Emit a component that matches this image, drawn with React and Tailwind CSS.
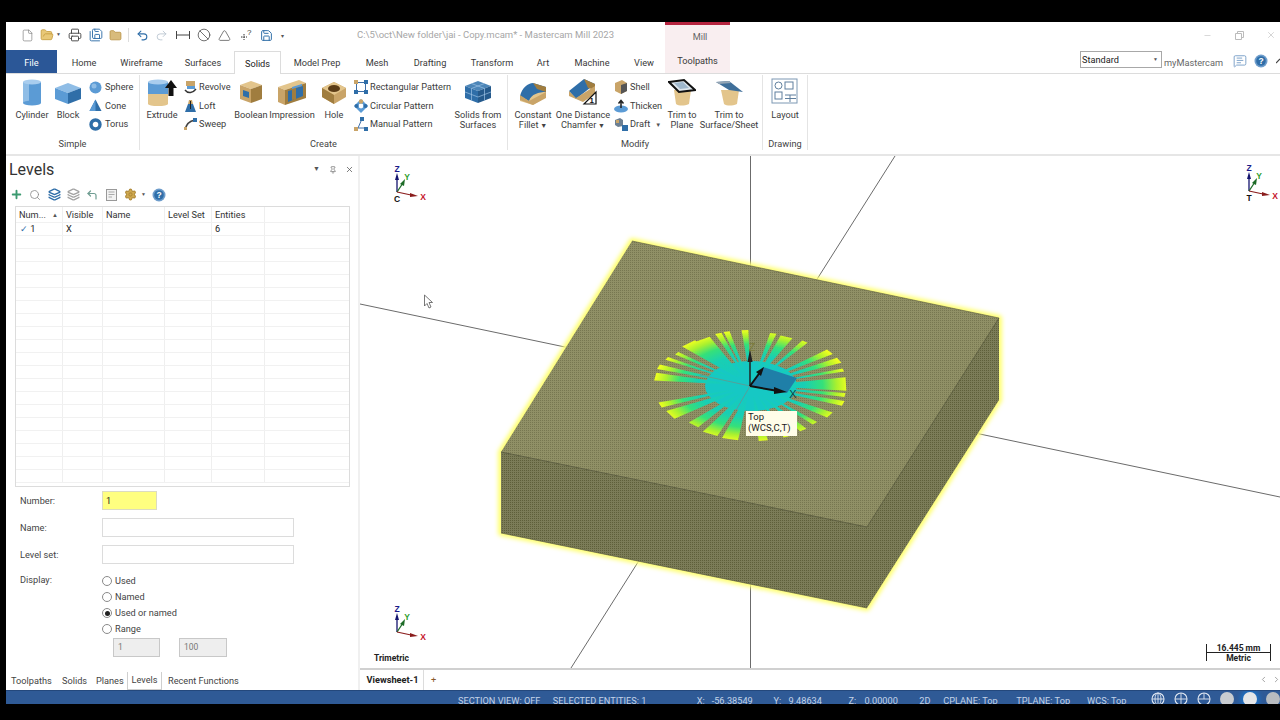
import React from "react";
import { File, FolderOpen, Printer, SaveAll, Folder, Undo2, Redo2, Ban, Triangle, Save, Plus, Search, Layers, CornerUpLeft, Settings, X, Minus, Pin, ChevronLeft, ChevronRight, MessageSquareText } from "lucide-react";

const FONT = "font-['Roboto','Open_Sans',sans-serif]";

const I = ({ w = 28, h = 28, children }) => (
  <svg width={w} height={h} viewBox={`0 0 ${w} ${h}`} className="block shrink-0">{children}</svg>
);
const BLUE = "#5b9bd5", DBLUE = "#2f6ea8", LBLUE = "#8fbde6", TAN = "#c9a468", DTAN = "#a07d3f", LTAN = "#e3c58c";

const Cylinder = () => (
  <I w={20} h={28}>
    <rect x="1" y="4" width="18" height="21" fill={BLUE} />
    <rect x="1" y="4" width="6" height="21" fill={LBLUE} />
    <ellipse cx="10" cy="25" rx="9" ry="2.5" fill={BLUE} />
    <ellipse cx="10" cy="4" rx="9" ry="2.5" fill="#a9cdee" />
  </I>
);
const Block = () => (
  <I w={28} h={28}>
    <polygon points="14,5 27,10 14,15 1,10" fill={LBLUE} />
    <polygon points="1,10 14,15 14,26 1,21" fill={BLUE} />
    <polygon points="27,10 14,15 14,26 27,21" fill={DBLUE} />
  </I>
);
const Sphere = () => (<I w={13} h={13}><circle cx="6.5" cy="6.5" r="6" fill={BLUE} /><circle cx="5" cy="5" r="2.5" fill={LBLUE} /></I>);
const Cone = () => (<I w={13} h={13}><polygon points="6.5,0.5 12.5,12 0.5,12" fill={DBLUE} /><polygon points="6.5,0.5 6.5,12 0.5,12" fill={BLUE} /></I>);
const Torus = () => (<I w={13} h={13}><circle cx="6.5" cy="6.5" r="4.5" fill="none" stroke={DBLUE} strokeWidth="3.4" /></I>);
const Extrude = () => (
  <I w={30} h={28}>
    <rect x="1" y="15" width="20" height="11" fill={LTAN} />
    <ellipse cx="11" cy="26" rx="10" ry="2" fill={LTAN} />
    <rect x="1" y="4" width="20" height="12" fill={BLUE} />
    <ellipse cx="11" cy="4" rx="10" ry="2.5" fill="#a9cdee" />
    <polygon points="24,2 30,10 26.5,10 26.5,18 21.5,18 21.5,10 18,10" fill="#111" />
  </I>
);
const Revolve = () => (<I w={13} h={14}><rect x="2" y="1" width="9" height="5" fill={TAN} /><rect x="3" y="6" width="8" height="3" fill={BLUE} /><path d="M1 10c3 4 8 3 11-1" fill="none" stroke="#333" strokeWidth="1.4" /></I>);
const Loft = () => (<I w={13} h={14}><polygon points="1,13 12,13 9,5 4,5" fill={DBLUE} /><polygon points="4,5 9,5 8,1 5,1" fill={TAN} /><path d="M6.5 10V2" stroke="#222" strokeWidth="1" /></I>);
const Sweep = () => (<I w={13} h={14}><path d="M1.5 12.5C2 7 6 4 11 3" fill="none" stroke="#444" strokeWidth="1.6" /><rect x="9" y="1" width="4" height="4" fill={DBLUE} /><rect x="0" y="10" width="3" height="3" fill={TAN} /></I>);
const Boolean_ = () => (
  <I w={26} h={28}>
    <polygon points="13,3 24,7 13,11 2,7" fill={LTAN} />
    <polygon points="2,7 13,11 13,25 2,21" fill={TAN} />
    <polygon points="24,7 13,11 13,25 24,21" fill={DTAN} />
    <polygon points="5,12 11,14 11,20 5,18" fill={DBLUE} />
  </I>
);
const Impression = () => (
  <I w={30} h={28}>
    <polygon points="1,9 22,2 29,5 8,12" fill={LTAN} />
    <polygon points="1,9 8,12 8,27 1,24" fill={TAN} />
    <polygon points="8,12 29,5 29,20 8,27" fill={DTAN} />
    <polygon points="11,13 15,12 15,22 19,21 19,10 26,8 26,18 11,24" fill={DBLUE} />
    <polygon points="15,9 25,6 25,8 15,11" fill={BLUE} />
  </I>
);
const Hole = () => (
  <I w={26} h={26}>
    <polygon points="13,2 25,8 25,17 13,24 1,17 1,8" fill={TAN} />
    <polygon points="13,2 25,8 13,15 1,8" fill={LTAN} />
    <ellipse cx="13" cy="8.5" rx="6" ry="3.6" fill="#5c3d17" />
    <polygon points="1,8 13,15 13,24 1,17" fill={DTAN} />
  </I>
);
const RectP = () => (<I w={14} h={14}><rect x="2.5" y="2.5" width="9" height="9" fill="none" stroke="#3f6fa8" strokeWidth="1" /><rect x="0" y="0" width="4" height="4" fill={TAN} /><rect x="10" y="0" width="4" height="4" fill={DBLUE} /><rect x="0" y="10" width="4" height="4" fill={DBLUE} /><rect x="10" y="10" width="4" height="4" fill={DBLUE} /></I>);
const CircP = () => (<I w={14} h={14}><polygon points="7,0 14,7 7,14 0,7" fill={BLUE} /><circle cx="7" cy="7" r="2.4" fill="#fff" /><circle cx="7" cy="2.5" r="2.2" fill={TAN} /><circle cx="11.5" cy="7" r="2" fill={DBLUE} /><circle cx="2.5" cy="7" r="2" fill={DBLUE} /></I>);
const ManP = () => (<I w={14} h={14}><path d="M4 11 7.500 3M4 11h7" stroke="#3f6fa8" strokeWidth="1" fill="none" /><rect x="6" y="0" width="4" height="4" fill={DBLUE} /><rect x="0" y="10" width="4" height="4" fill={TAN} /><rect x="10" y="10" width="4" height="4" fill={DBLUE} /></I>);
const SolidSurf = () => (
  <I w={28} h={28}>
    <polygon points="14,3 27,8 14,13 1,8" fill="#4d86b8" />
    <polygon points="1,8 14,13 14,25 1,20" fill="#2f6ea8" />
    <polygon points="27,8 14,13 14,25 27,20" fill="#255a8c" />
    <path d="M7.500 5.500 20.500 10.500M20.500 5.500 7.500 10.500M1 14 14 19 27 14M7.500 10.500V22.500M20.500 10.500V22.500" stroke="#9cc2e4" strokeWidth=".7" fill="none" />
  </I>
);
const Fillet = () => (
  <I w={28} h={26}>
    <path d="M1 16V21L14 25 27 17V11Z" fill={LTAN} />
    <path d="M1 16C3 8 9 3 14 3L27 7V12C20 12 12 14 10 21Z" fill={DBLUE} />
    <path d="M14 3 27 7V12L18 9Z" fill={DTAN} />
    <path d="M1 15 10 21 27 12V18L14 25 1 20Z" fill={TAN} />
  </I>
);
const Chamfer = () => (
  <I w={30} h={28}>
    <path d="M1 13 16 1 27 6 8 21Z" fill={DBLUE} />
    <path d="M16 1 27 6V12L20 10Z" fill={DTAN} />
    <path d="M1 13 8 20 27 8V16L15 24 1 18Z" fill={TAN} />
    <polygon points="16,26 28,14 28,26" fill="#fff" stroke="#111" strokeWidth="1.200" />
    <text x="21.500" y="25" fontSize="8" fontWeight="700" fill="#111" fontFamily="Liberation Sans">1</text>
  </I>
);
const Shell = () => (<I w={14} h={14}><polygon points="1,3 8,0 13,3 13,11 7,14 1,11" fill={TAN} /><polygon points="7,5 13,3 13,11 7,14" fill="#555" /></I>);
const Thicken = () => (<I w={14} h={14}><ellipse cx="7" cy="10" rx="7" ry="3.500" fill={BLUE} /><path d="M7 9V2M4.500 4.500 7 1.500 9.500 4.500" stroke="#222" strokeWidth="1.500" fill="none" /></I>);
const Draft = () => (<I w={14} h={14}><polygon points="1,3 6,1 9,3 9,9 4,10 1,8" fill="#6c7f92" /><rect x="8" y="8" width="6" height="6" fill={DBLUE} /><rect x="2" y="3" width="3" height="3" fill={TAN} /></I>);
const TrimPlane = () => (
  <I w={28} h={28}>
    <path d="M6 12H23L21 26C16 28 11 28 8 26Z" fill={LTAN} />
    <polygon points="1,4 16,2 27,12 11,14" fill="#dfe7ee" stroke="#111" strokeWidth="2" />
    <polygon points="6,5 15,4 21,10 12,11" fill="#9fb7cc" />
  </I>
);
const TrimSurf = () => (
  <I w={30} h={28}>
    <path d="M7 12H25L23 26C18 28 13 28 10 26Z" fill={LTAN} />
    <polygon points="2,4 15,3 29,14 15,12" fill="#3f6f9a" />
    <polygon points="2,4 15,3 17,5 5,6" fill="#95a6b5" />
  </I>
);
const Layout = () => (
  <I w={28} h={28}>
    <rect x="1" y="1" width="25" height="24" fill="none" stroke="#7c98b3" strokeWidth="1" />
    <circle cx="7.500" cy="7.500" r="3.500" fill="none" stroke="#5f7f9e" />
    <rect x="14" y="4" width="8" height="7" fill="none" stroke="#5f7f9e" />
    <rect x="4" y="14" width="7" height="7" fill="none" stroke="#5f7f9e" />
    <path d="M14 20.500H25M14 17H25M19 17V24" stroke="#5f7f9e" fill="none" />
  </I>
);

const Big = ({ w, icon, label, caret }) => (
  <div style={{ width: w }} className="flex flex-col items-center shrink-0 h-[62px]">
    <div className="h-[31px] flex items-end justify-center">{icon}</div>
    <div className="mt-[4px] text-center leading-[9.5px] whitespace-pre">{label}{caret && <span className="text-[#444] text-[7px]"> ▼</span>}</div>
  </div>
);
const Small = ({ icon, label, caret, gap = "gap-[3px]" }) => (
  <div className={`h-[18.5px] flex items-center ${gap} whitespace-nowrap`}>{icon}<span>{label}</span>{caret && <span className="text-[#555] text-[6px] ml-[3px]">▼</span>}</div>
);
const Col = ({ w, pl, children }) => (
  <div style={{ width: w, paddingLeft: pl }} className="shrink-0 flex flex-col pt-[3px] h-[62px]">{children}</div>
);
const Group = ({ w, label, children }) => (
  <div style={{ width: w }} className="shrink-0 flex flex-col h-full border-r border-[#e4e4e4]">
    <div className="flex h-[62px]">{children}</div>
    <div className="text-center text-[#444] leading-[12px] mt-[1px]">{label}</div>
  </div>
);

const TABS = [
  ["Home", 54], ["Wireframe", 61], ["Surfaces", 62],
];
const TABS2 = [
  ["Model Prep", 72], ["Mesh", 48], ["Drafting", 58], ["Transform", 66], ["Art", 36], ["Machine", 62], ["View", 42],
];
const Tab = ({ w, children }) => (
  <div style={{ width: w }} className="shrink-0 h-[23px] pt-[2px] flex items-center justify-center text-[#3a3a3a]">{children}</div>
);

const Triad = ({ x, y, letter }) => (
  <g>
    <path d={`M${x} ${y}V${y - 14}`} stroke="#14146e" strokeWidth="1.300" />
    <polygon points={`${x},${y - 19} ${x - 2},${y - 12} ${x + 2},${y - 12}`} fill="#14146e" />
    <path d={`M${x} ${y}L${x + 6} ${y - 9}`} stroke="#1d6b27" strokeWidth="1.300" />
    <polygon points={`${x + 8},${y - 13} ${x + 3},${y - 8} ${x + 7},${y - 6}`} fill="#1d6b27" />
    <path d={`M${x} ${y}L${x + 14} ${y + 3}`} stroke="#8a1c1c" strokeWidth="1.200" />
    <polygon points={`${x + 21},${y + 4} ${x + 13},${y + 1} ${x + 13},${y + 5}`} fill="#8a1c1c" />
    <text x={x} y={y - 20} textAnchor="middle" fontSize="8.500" fontWeight="700" fill="#1b1b8a" fontFamily="Liberation Sans">Z</text>
    <text x={x + 10} y={y - 12} textAnchor="middle" fontSize="8.500" fontWeight="700" fill="#2ca02c" fontFamily="Liberation Sans">Y</text>
    <text x={x + 26} y={y + 8} textAnchor="middle" fontSize="8.500" fontWeight="700" fill="#c4122a" fontFamily="Liberation Sans">X</text>
    {letter && <text x={x} y={y + 10} textAnchor="middle" fontSize="8.500" fontWeight="700" fill="#111" fontFamily="Liberation Sans">{letter}</text>}
  </g>
);

const CX = 751, CY = 386, RX = 97, RY = 56;
const rayTips = [
  [345, 60, 2], [265, 70, 2], [290, 65, 1.8], [430, 70, 2], [470, 80, 4], [525, 95, 2], [600, 125, 2.8], [630, 150, 2.8], [640, 180, 1.6],
  [650, 222, 7], [645, 255, 2], [640, 280, 2.6], [600, 315, 3.2], [555, 340, 2], [520, 360, 2.4], [470, 380, 2], [400, 392, 2.8], [300, 388, 5], [240, 372, 5],
  [190, 345, 4], [120, 315, 4.8], [90, 285, 2.8], [75, 200, 4], [85, 170, 2.4], [110, 145, 1.6], [140, 130, 1.6], [175, 100, 5], [215, 88, 5.5],
];
const rays = rayTips.map(([cx, cy, w]) => {
  const nx = (cx / 3 + 630 - CX) / RX, ny = (cy / 3 + 310 - CY) / RY;
  const t = Math.atan2(ny, nx), d = (w * Math.PI) / 180, o = Math.min(Math.hypot(nx, ny), 1.02);
  const p = (a, r) => `${(CX + Math.cos(a) * r * RX).toFixed(1)},${(CY + Math.sin(a) * r * RY).toFixed(1)}`;
  return [p(t - d * .6, .2), p(t - d, o), p(t + d, o), p(t + d * .6, .2)].join(" ");
});

const Scene = () => (
  <svg viewBox="360 156 920 512" width="920" height="512" className="block">
    <defs>
      <pattern id="mt" width="2" height="2" patternUnits="userSpaceOnUse">
        <rect width="2" height="2" fill="#909066" /><rect width="1" height="1" fill="#777750" />
      </pattern>
      <pattern id="ms" width="2" height="2" patternUnits="userSpaceOnUse">
        <rect width="2" height="2" fill="#7b7c58" /><rect width="1" height="1" fill="#5e5f3a" />
      </pattern>
      <radialGradient id="rg" gradientUnits="userSpaceOnUse" cx="0" cy="0" r="1" gradientTransform={`translate(${CX} ${CY}) scale(${RX} ${RY})`}>
        <stop offset="0" stopColor="#14c6c8" />
        <stop offset=".55" stopColor="#18cfb4" />
        <stop offset=".74" stopColor="#35e07a" />
        <stop offset=".88" stopColor="#a8f030" />
        <stop offset="1" stopColor="#eeff20" />
      </radialGradient>
      <filter id="gl" x="-5%" y="-5%" width="110%" height="110%"><feGaussianBlur stdDeviation="2.200" /></filter>
    </defs>
    <path d="M750.500 156V668M895 156 571 668M360 304 1280 497" stroke="#6b6b6b" strokeWidth="1" fill="none" />
    <polygon points="632,241 999,318 999,400 867,608 501,533 501,452" fill="#ffff70" stroke="#ffff70" strokeWidth="6" strokeLinejoin="round" filter="url(#gl)" />
    <polygon points="632,241 999,318 867,527 501,452" fill="url(#mt)" />
    <polygon points="501,452 867,527 867,608 501,533" fill="url(#ms)" />
    <polygon points="999,318 999,400 867,608 867,527" fill="url(#ms)" />
    <path d="M501 452 867 527 999 318" stroke="#55563f" strokeWidth=".9" fill="none" />
    <path d="M632 241 999 318M501 533 867 608" stroke="#55563f" strokeWidth=".6" fill="none" />
    <ellipse cx={CX} cy={CY} rx="46" ry="25" fill="#16c8c4" />
    <g fill="url(#rg)">{rays.map((r, i) => <polygon key={i} points={r} />)}</g>
    <polygon points="763,367 797,378 787,393 750,386" fill="#1f7fa8" />
    <path d="M750 386 700 375M750 386 735 412" stroke="#6f8f88" strokeWidth=".7" />
    <path d="M750 386V360" stroke="#222" strokeWidth="1.500" />
    <polygon points="750,349 747.500,362 752.500,362" fill="#222" />
    <path d="M750 386 761 371" stroke="#111" strokeWidth="2" />
    <polygon points="764,367 756,372 761,376" fill="#111" />
    <path d="M750 386 778 391" stroke="#111" strokeWidth="2" />
    <polygon points="787,392 774,387 774,394" fill="#111" />
    <text x="793" y="398" textAnchor="middle" fontSize="11" fill="#143c3c" fontFamily="Liberation Sans">X</text>
    <text x="752" y="351" textAnchor="middle" fontSize="11" fill="#7c7c3c" fontFamily="Liberation Sans">Z</text>
    <Triad x={397} y={192} letter="C" />
    <Triad x={1249} y={191} letter="T" />
    <Triad x={397} y={632} />
    <path d="M424.500 295V306L427 303.500 429 308 431 307 429 302.500H432.500Z" fill="#fff" stroke="#555" strokeWidth=".8" />
  </svg>
);

const Globe = ({ k }) => (
  <svg width="14" height="14" viewBox="0 0 14 14" className="shrink-0 block">
    <circle cx="7" cy="7" r="6" fill="none" stroke="#dfe7f2" strokeWidth="1.100" />
    <path d={k === 2 ? "M1 7H13M7 1V7" : "M1 7H13M7 1V13"} stroke="#dfe7f2" strokeWidth=".9" fill="none" />
    {k === 0 && <ellipse cx="7" cy="7" rx="3" ry="6" fill="none" stroke="#dfe7f2" strokeWidth=".9" />}
  </svg>
);
const Ball = ({ c, glow }) => (
  <div className={`w-[14px] h-[14px] shrink-0 rounded-full ${glow ? "bg-[#e4e6e8] shadow-[0_0_4px_3px_#1f6fc0]" : c}`} />
);

const Col_ = [47, 40, 62, 47, 53, 85];
const Row = ({ children, h = "h-[13px]" }) => (
  <div className={`flex ${h} border-b border-[#f1f1f1]`}>
    {Col_.map((w, i) => (
      <div key={i} style={{ width: w }} className="shrink-0 border-r border-[#efefef] last:border-r-0 px-[3px] flex items-center overflow-hidden whitespace-nowrap">{children && children[i]}</div>
    ))}
  </div>
);
const Radio = ({ label, on }) => (
  <div className="h-[16px] flex items-center gap-[3px]">
    <div className="w-[10px] h-[10px] rounded-full border border-[#8a8a8a] bg-white flex items-center justify-center">{on && <div className="w-[5px] h-[5px] rounded-full bg-[#222]" />}</div>
    <span>{label}</span>
  </div>
);

export default function App() {
  return (
    <div className={`w-[1280px] h-[720px] bg-black overflow-hidden flex flex-col text-[9.2px] text-[#333] ${FONT}`}>
      <div className="h-[22px] shrink-0 bg-black" />
      <div className="ml-[6px] flex-1 min-h-0 bg-white flex flex-col">
        {/* title bar */}
        <div className="h-[26px] shrink-0 flex items-center">
          <div className="w-[351px] shrink-0 h-full flex items-center pl-[15px]">
            <File size={13} color="#777" strokeWidth={1.2} className="shrink-0" />
            <FolderOpen size={14} color="#c49a3c" fill="#e8c878" strokeWidth={1.4} className="shrink-0 ml-[6px]" />
            <span className="text-[5px] text-[#555] ml-[2px]">▼</span>
            <Printer size={14} color="#444" strokeWidth={1.6} className="shrink-0 ml-[7px]" />
            <SaveAll size={14} color="#2f6ea8" strokeWidth={1.6} className="shrink-0 ml-[7px]" />
            <Folder size={13} color="#b58d3d" fill="#d8bb7c" strokeWidth={1.4} className="shrink-0 ml-[6px]" />
            <div className="w-px h-[14px] bg-[#ddd] ml-[6px]" />
            <Undo2 size={13} color="#2f6ea8" strokeWidth={2} className="shrink-0 ml-[7px]" />
            <Redo2 size={13} color="#b8c4d0" strokeWidth={1.6} className="shrink-0 ml-[6px]" />
            <svg width="14" height="10" viewBox="0 0 14 10" className="shrink-0 ml-[8px]"><path d="M.5 1V9M13.500 1V9M1 5H13" stroke="#444" strokeWidth="1" fill="none" /></svg>
            <Ban size={14} color="#444" strokeWidth={1.3} className="shrink-0 ml-[7px]" />
            <Triangle size={13} color="#444" strokeWidth={1.3} className="shrink-0 ml-[7px]" />
            <svg width="14" height="14" viewBox="0 0 14 14" className="shrink-0 ml-[8px]"><path d="M5 6V12M2 9H8" stroke="#333" strokeWidth="1" strokeDasharray="1.500 1" /><text x="8" y="7" fontSize="8" fill="#333" fontFamily="Liberation Sans">?</text></svg>
            <Save size={13} color="#2f6ea8" strokeWidth={1.8} className="shrink-0 ml-[7px]" />
            <span className="text-[6px] text-[#555] ml-[8px]">▾</span>
          </div>
          <div className="w-[308px] shrink-0 text-[#a6a6a6] text-[9.5px] whitespace-nowrap">C:\5\oct\New folder\jai - Copy.mcam* - Mastercam Mill 2023</div>
          <div className="w-[65px] shrink-0 h-full bg-[#f9eef0] border-t-[3px] border-[#b5243f] flex items-center justify-center pl-[5px] text-[#666]">Mill</div>
          <div className="flex-1" />
          <div className="flex items-center pr-[4px] text-[#bbb]">
            <Minus size={9} strokeWidth={1.5} className="mr-[23px]" />
            <svg width="9" height="9" viewBox="0 0 9 9" className="mr-[22px]"><path d="M.5 2.500H6.500V8.500H.5ZM2.500 2.500V.5H8.500V6.500H6.500" fill="none" stroke="#bbb" /></svg>
            <X size={10} strokeWidth={1.5} />
          </div>
        </div>
        {/* tabs */}
        <div className="h-[26px] shrink-0 flex items-end border-b border-[#dcdcdc]">
          <div className="w-[51px] h-[23px] pt-[2px] shrink-0 bg-[#2b5797] text-white flex items-center justify-center">File</div>
          {TABS.map(([t, w]) => <Tab key={t} w={w}>{t}</Tab>)}
          <div className="w-[47px] h-[23px] pt-[2px] -mb-px shrink-0 bg-white border border-b-0 border-[#dcdcdc] flex items-center justify-center text-[#222]">Solids</div>
          {TABS2.map(([t, w]) => <Tab key={t} w={w}>{t}</Tab>)}
          <div className="w-[65px] h-full shrink-0 bg-[#f9eef0] flex items-end justify-center pb-[5px] text-[#3a3a3a]">Toolpaths</div>
          <div className="flex-1" />
          <div className="h-full flex items-center">
            <div className="w-[82px] h-[17px] mb-[2px] border border-[#a8a8a8] flex items-center justify-between pl-[1px] pr-[3px] text-[#222]"><span>Standard</span><span className="text-[5px] text-[#555]">▼</span></div>
            <span className="ml-[2px] w-[69px] text-[#666] mt-[4px]">myMastercam</span>
            <MessageSquareText size={14} color="#6f98c4" strokeWidth={1.5} className="shrink-0" />
            <svg width="14" height="14" viewBox="0 0 14 14" className="shrink-0 ml-[7px]"><circle cx="7" cy="7" r="6.500" fill="#6d9ccb" /><circle cx="7" cy="7" r="4.800" fill="#2f6ea8" /><text x="7" y="10" textAnchor="middle" fontSize="8.500" fontWeight="700" fill="#fff" fontFamily="Liberation Sans">?</text></svg>
            <svg width="4" height="8" viewBox="0 0 4 8" className="shrink-0 ml-[8px]"><path d="M0 6 4 2" stroke="#444" strokeWidth="1.200" /></svg>
          </div>
        </div>
        {/* ribbon */}
        <div className="h-[82px] shrink-0 flex border-b-2 border-[#e6e6e6] pt-[1px] pb-[4px] text-[#3d3d3d]">
          <Group w={134} label="Simple">
            <div className="w-[8px] shrink-0" />
            <Big w={36} icon={<Cylinder />} label="Cylinder" />
            <Big w={36} icon={<Block />} label="Block" />
            <Col w={52} pl={3}>
              <Small icon={<Sphere />} label="Sphere" />
              <Small icon={<Cone />} label="Cone" />
              <Small icon={<Torus />} label="Torus" />
            </Col>
          </Group>
          <Group w={368} label="Create">
            <Big w={44} icon={<Extrude />} label="Extrude" />
            <Col w={48} pl={0}>
              <Small icon={<Revolve />} label="Revolve" gap="gap-[2px]" />
              <Small icon={<Loft />} label="Loft" gap="gap-[2px]" />
              <Small icon={<Sweep />} label="Sweep" gap="gap-[2px]" />
            </Col>
            <Big w={38} icon={<Boolean_ />} label="Boolean" />
            <Big w={44} icon={<Impression />} label="Impression" />
            <Big w={40} icon={<Hole />} label="Hole" />
            <Col w={98} pl={0}>
              <Small icon={<RectP />} label="Rectangular Pattern" gap="gap-[2px]" />
              <Small icon={<CircP />} label="Circular Pattern" gap="gap-[2px]" />
              <Small icon={<ManP />} label="Manual Pattern" gap="gap-[2px]" />
            </Col>
            <Big w={52} icon={<SolidSurf />} label={"Solids from\nSurfaces"} />
          </Group>
          <Group w={255} label="Modify">
            <div className="w-[2px] shrink-0" />
            <Big w={46} icon={<Fillet />} label={"Constant\nFillet"} caret />
            <Big w={54} icon={<Chamfer />} label={"One Distance\nChamfer"} caret />
            <div className="w-[4px] shrink-0" />
            <Col w={50} pl={0}>
              <Small icon={<Shell />} label="Shell" gap="gap-[2px]" />
              <Small icon={<Thicken />} label="Thicken" gap="gap-[2px]" />
              <Small icon={<Draft />} label="Draft" caret gap="gap-[2px]" />
            </Col>
            <Big w={36} icon={<TrimPlane />} label={"Trim to\nPlane"} />
            <Big w={58} icon={<TrimSurf />} label={"Trim to\nSurface/Sheet"} />
          </Group>
          <Group w={45} label="Drawing">
            <Big w={44} icon={<Layout />} label="Layout" />
          </Group>
        </div>
        {/* content */}
        <div className="flex-1 min-h-0 flex">
          {/* left panel */}
          <div className="w-[354px] shrink-0 h-full flex flex-col border-r-2 border-[#f0f0f0]">
            <div className="h-[27px] shrink-0 flex items-center pl-[3px] pr-[2px]">
              <span className="text-[16px] text-[#333] leading-none">Levels</span>
              <div className="flex-1" />
              <span className="text-[7px] text-[#555] mr-[9px]">▼</span>
              <Pin size={8} color="#666" className="mr-[8px]" />
              <X size={9} color="#555" className="mr-[2px]" />
            </div>
            <div className="h-[23px] shrink-0 flex items-center pl-[4px]">
              <Plus size={13} color="#3b9a70" strokeWidth={3.5} className="shrink-0" />
              <Search size={12} color="#888" strokeWidth={1.6} className="shrink-0 ml-[6px]" />
              <Layers size={13} color="#2f6ea8" strokeWidth={2.4} className="shrink-0 ml-[7px]" />
              <Layers size={13} color="#a3a3a3" strokeWidth={2.4} className="shrink-0 ml-[6px]" />
              <CornerUpLeft size={12} color="#6f9d92" strokeWidth={2.4} className="shrink-0 ml-[6px]" />
              <svg width="11" height="12" viewBox="0 0 11 12" className="shrink-0 ml-[8px]"><rect x=".5" y=".5" width="10" height="11" fill="#f2f2f2" stroke="#999" /><path d="M2.500 3H8.500M2.500 5.500H8.500M2.500 8H6" stroke="#aaa" /></svg>
              <Settings size={13} color="#b08a3a" fill="#d0aa50" strokeWidth={2} className="shrink-0 ml-[7px]" />
              <span className="text-[5px] text-[#555] ml-[4px]">▼</span>
              <svg width="14" height="14" viewBox="0 0 14 14" className="shrink-0 ml-[6px]"><circle cx="7" cy="7" r="6.500" fill="#6d9ccb" /><circle cx="7" cy="7" r="4.800" fill="#2f6ea8" /><text x="7" y="10" textAnchor="middle" fontSize="8.500" fontWeight="700" fill="#fff" fontFamily="Liberation Sans">?</text></svg>
            </div>
            <div className="ml-[9px] w-[335px] h-[281px] shrink-0 border border-[#dcdcdc] overflow-hidden">
              <Row h="h-[16px]">{[<span className="flex w-full justify-between items-center">Num...<span className="text-[6px] text-[#555] mr-[1px]">▲</span></span>, "Visible", "Name", "Level Set", "Entities", ""]}</Row>
              <Row>{[<span className="text-[#222] pl-[1px]"><span className="text-[#2f6ea8]">✓</span> 1</span>, <span className="text-[#222]">X</span>, "", "", <span className="text-[#222]">6</span>, ""]}</Row>
              {Array.from({ length: 19 }).map((_, i) => <Row key={i} />)}
            </div>
            <div className="flex-1 min-h-0 pl-[14px] text-[#444]">
              <div className="h-[27px] flex items-center"><span className="w-[82px]">Number:</span><div className="w-[55px] h-[19px] bg-[#ffff80] border border-[#dcdcc0] pl-[3px] flex items-center text-[#222]">1</div></div>
              <div className="h-[27px] flex items-center"><span className="w-[82px]">Name:</span><div className="w-[192px] h-[19px] border border-[#dcdcdc]" /></div>
              <div className="h-[27px] flex items-center"><span className="w-[82px]">Level set:</span><div className="w-[192px] h-[19px] border border-[#dcdcdc]" /></div>
              <div className="flex pt-[5px]">
                <span className="w-[82px]">Display:</span>
                <div className="flex flex-col">
                  <Radio label="Used" />
                  <Radio label="Named" />
                  <Radio label="Used or named" on />
                  <Radio label="Range" />
                  <div className="flex pl-[11px] mt-[1px] text-[#777] text-[8.5px]">
                    <div className="w-[47px] h-[19px] bg-[#eeeeee] border border-[#c8c8c8] pl-[4px] flex items-center">1</div>
                    <div className="w-[48px] h-[19px] ml-[19px] bg-[#eeeeee] border border-[#c8c8c8] pl-[4px] flex items-center">100</div>
                  </div>
                </div>
              </div>
            </div>
            <div className="h-[18px] shrink-0 flex items-center pl-[5px] text-[#444]">
              <span className="w-[51px]">Toolpaths</span>
              <span className="w-[34px]">Solids</span>
              <span className="w-[31px]">Planes</span>
              <div className="w-[35px] h-full border-x border-b border-[#cfcfcf] flex items-center justify-center">Levels</div>
              <span className="ml-[6px]">Recent Functions</span>
            </div>
          </div>
          {/* viewport */}
          <div className="flex-1 min-w-0 h-full flex flex-col">
            <div className="relative h-[512px] shrink-0 overflow-hidden">
              <Scene />
              <div className="absolute left-[386px] top-[255px] w-[51px] h-[25px] bg-[#fffde8] text-[#222] text-[9.5px] leading-[11px] px-[2px] whitespace-nowrap">Top<br />(WCS,C,T)</div>
              <div className="absolute left-[14px] top-[497px] font-bold text-[#222] text-[8.5px] leading-[11px]">Trimetric</div>
              <div className="absolute left-[846px] top-[488px] w-[65px] h-[17px] border-x border-[#222] text-[#222] font-bold text-[8.5px] leading-[8px] text-center">
                <div className="border-b border-[#222] h-[9px]">16.445 mm</div>
                <div className="pt-[1px]">Metric</div>
              </div>
            </div>
            <div className="flex-1 min-h-0 border-t-2 border-[#d0d0d0] flex items-stretch">
              <div className="w-[2px]" />
              <div className="w-[62px] flex items-center justify-center font-bold text-[#222] border-r border-[#dcdcdc] text-[9.2px]">Viewsheet-1</div>
              <span className="ml-[7px] self-center text-[#8a5a2a]">+</span>
              <div className="flex-1" />
              <ChevronLeft size={9} color="#888" className="self-center mr-[4px]" />
              <ChevronRight size={9} color="#888" className="self-center -mr-[1px]" />
            </div>
          </div>
        </div>
        {/* status */}
        <div className="h-[14.5px] shrink-0 bg-[#2f5a96] overflow-hidden flex items-start pt-[4px] text-[#c3d3e8] leading-[11px] whitespace-nowrap border-t border-[#24487c]">
          <span className="ml-[452px] w-[95px]">SECTION VIEW: OFF</span>
          <span className="w-[144px]">SELECTED ENTITIES: 1</span>
          <span className="w-[15px]">X:</span>
          <span className="w-[62px]">-56.38549</span>
          <span className="w-[15px]">Y:</span>
          <span className="w-[60px]">9.48634</span>
          <span className="w-[16px]">Z:</span>
          <span className="w-[55px]">0.00000</span>
          <span className="w-[24px]">2D</span>
          <span className="w-[73px]">CPLANE: Top</span>
          <span className="w-[71px]">TPLANE: Top</span>
          <span className="w-[65px]">WCS: Top</span>
          <div className="flex gap-[9px] -mt-[3px] -ml-[1px]">
            <Globe k={0} />
            <Globe k={1} />
            <Globe k={2} />
            <Ball c="bg-[#c8ccd0]" />
            <Ball glow />
            <Ball c="bg-[#b8bcc0]" />
          </div>
        </div>
      </div>
      <div className="h-[16px] shrink-0 bg-black" />
    </div>
  );
}
